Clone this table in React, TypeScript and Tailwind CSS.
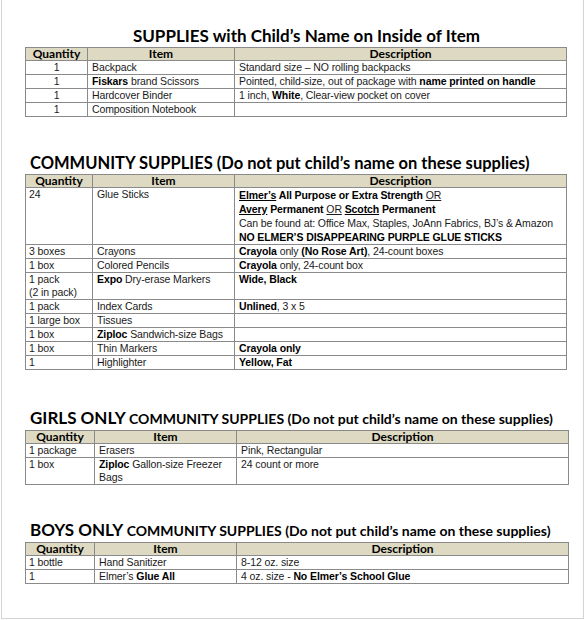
const body = "font-['Liberation_Sans','Arial',sans-serif]"
const head = "font-['Lato','Open_Sans',sans-serif]"

type Row = { qty: React.ReactNode; item: React.ReactNode; desc: React.ReactNode }

function SupplyTable({ rows, widths, center }: { rows: Row[]; widths: string[]; center?: boolean }) {
    return (
        <table className={`table-fixed border-collapse border border-[#8a8a8a] ${body} text-[10.5px] leading-[13px] tracking-[-0.1px] text-[#1a1a1a]`}>
            <colgroup>
                <col className={widths[0]} />
                <col className={widths[1]} />
                <col className={widths[2]} />
            </colgroup>
            <thead>
                <tr className={`bg-[#ddd9c3] ${head} text-[12px] font-bold leading-[12px] tracking-normal text-black`}>
                    <th className="border border-[#8a8a8a] px-1 text-center">Quantity</th>
                    <th className="border border-[#8a8a8a] px-1 text-center">Item</th>
                    <th className="border border-[#8a8a8a] px-1 text-center">Description</th>
                </tr>
            </thead>
            <tbody>
                {rows.map((r, i) => (
                    <tr key={i} className="align-top">
                        <td className={`border border-[#8a8a8a] px-[3px] ${center ? "text-center" : ""}`}>{r.qty}</td>
                        <td className="border border-[#8a8a8a] px-1">{r.item}</td>
                        <td className="border border-[#8a8a8a] px-1">{r.desc}</td>
                    </tr>
                ))}
            </tbody>
        </table>
    )
}

const B = ({ children }: { children: React.ReactNode }) => <b className="font-bold text-black">{children}</b>

export default function App() {
    const childRows: Row[] = [
        { qty: "1", item: "Backpack", desc: "Standard size – NO rolling backpacks" },
        { qty: "1", item: <><B>Fiskars</B> brand Scissors</>, desc: <>Pointed, child-size, out of package with <B>name printed on handle</B></> },
        { qty: "1", item: "Hardcover Binder", desc: <>1 inch, <B>White</B>, Clear-view pocket on cover</> },
        { qty: "1", item: "Composition Notebook", desc: "" },
    ]

    const communityRows: Row[] = [
        {
            qty: "24",
            item: "Glue Sticks",
            desc: (
                <div className="leading-[14px]">
                    <B><u>Elmer’s</u> All Purpose or Extra Strength</B> <u>OR</u>
                    <br />
                    <B><u>Avery</u> Permanent</B> <u>OR</u> <B><u>Scotch</u> Permanent</B>
                    <br />
                    <span className="whitespace-nowrap">Can be found at: Office Max, Staples, JoAnn Fabrics, BJ’s &amp; Amazon</span>
                    <br />
                    <B>NO ELMER’S DISAPPEARING PURPLE GLUE STICKS</B>
                </div>
            ),
        },
        { qty: "3 boxes", item: "Crayons", desc: <><B>Crayola</B> only <B>(No Rose Art)</B>, 24-count boxes</> },
        { qty: "1 box", item: "Colored Pencils", desc: <><B>Crayola</B> only, 24-count box</> },
        { qty: <>1 pack<br />(2 in pack)</>, item: <><B>Expo</B> Dry-erase Markers</>, desc: <B>Wide, Black</B> },
        { qty: "1 pack", item: "Index Cards", desc: <><B>Unlined</B>, 3 x 5</> },
        { qty: "1 large box", item: "Tissues", desc: "" },
        { qty: "1 box", item: <span className="whitespace-nowrap"><B>Ziploc</B> Sandwich-size Bags</span>, desc: "" },
        { qty: "1 box", item: "Thin Markers", desc: <B>Crayola only</B> },
        { qty: "1", item: "Highlighter", desc: <B>Yellow, Fat</B> },
    ]

    const girlsRows: Row[] = [
        { qty: "1 package", item: "Erasers", desc: "Pink, Rectangular" },
        { qty: "1 box", item: <><B>Ziploc</B> Gallon-size Freezer<br />Bags</>, desc: "24 count or more" },
    ]

    const boysRows: Row[] = [
        { qty: "1 bottle", item: "Hand Sanitizer", desc: "8-12 oz. size" },
        { qty: "1", item: <>Elmer’s <B>Glue All</B></>, desc: <>4 oz. size - <B>No Elmer’s School Glue</B></> },
    ]

    return (
        <div className="h-[620px] w-[585px] bg-white">
            <div className="ml-[1px] h-[619px] w-[583px] border-x border-b border-[#d4d4d4] pl-[23px]">
                <h1 className={`${head} pt-[25px] pl-[5px] text-center text-[17px] font-bold leading-[22px] text-black`}>
                    SUPPLIES with Child’s Name on Inside of Item
                </h1>
                <SupplyTable rows={childRows} widths={["w-[62px]", "w-[147px]", "w-[332px]"]} center />

                <h2 className={`${head} mt-[35px] pl-[5px] text-[16.5px] font-bold leading-[22px] text-black`}>
                    COMMUNITY SUPPLIES (Do not put child’s name on these supplies)
                </h2>
                <SupplyTable rows={communityRows} widths={["w-[67px]", "w-[142px]", "w-[332px]"]} />

                <h2 className={`${head} mt-[37px] whitespace-nowrap pl-[5px] text-[14px] font-bold leading-[22px] text-black`}>
                    <span className="text-[17px]">GIRLS ONLY</span> COMMUNITY SUPPLIES (Do not put child’s name on these supplies)
                </h2>
                <SupplyTable rows={girlsRows} widths={["w-[69px]", "w-[142px]", "w-[332px]"]} />

                <h2 className={`${head} mt-[34px] whitespace-nowrap pl-[5px] text-[14px] font-bold leading-[22px] text-black`}>
                    <span className="text-[17px]">BOYS ONLY</span> COMMUNITY SUPPLIES (Do not put child’s name on these supplies)
                </h2>
                <SupplyTable rows={boysRows} widths={["w-[69px]", "w-[142px]", "w-[332px]"]} />
            </div>
        </div>
    )
}
